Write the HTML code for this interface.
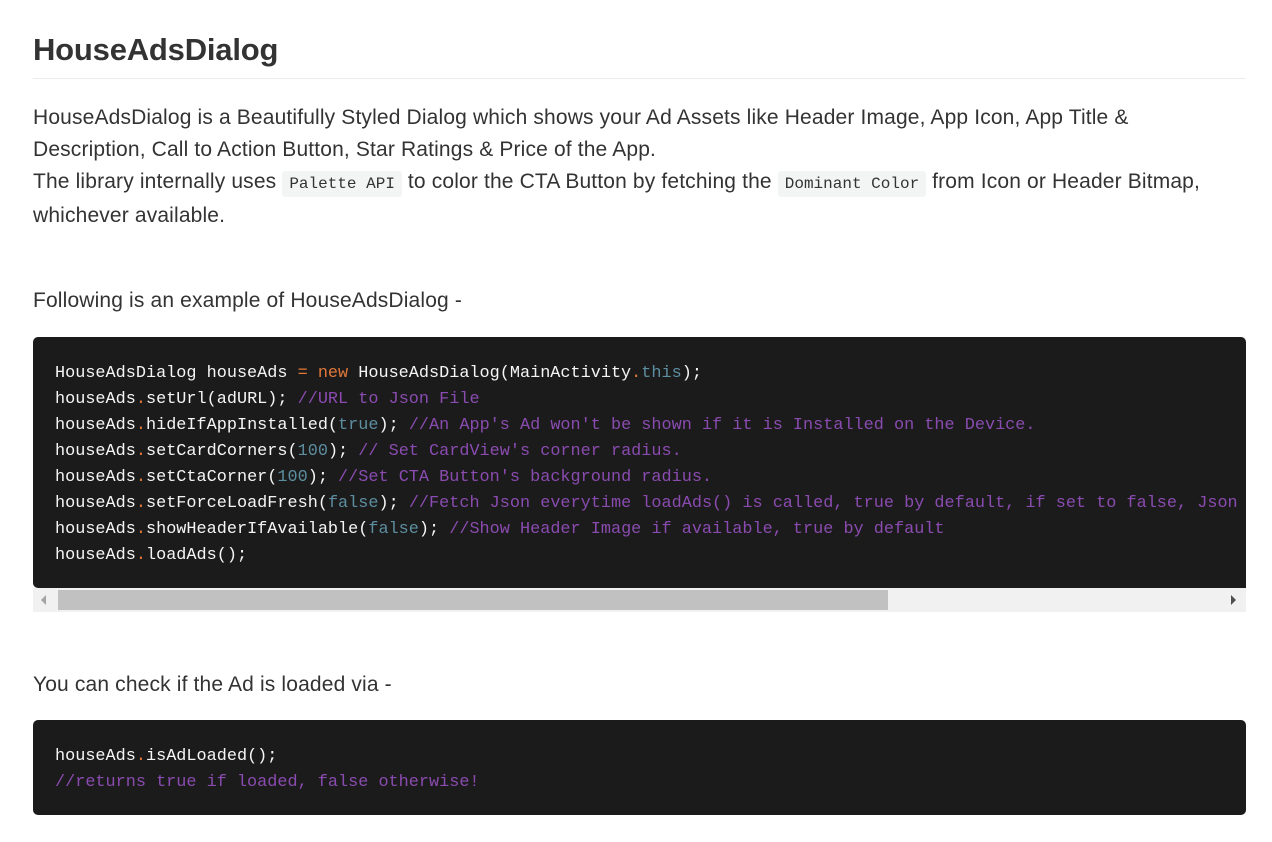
<!DOCTYPE html>
<html><head><meta charset="utf-8"><style>
body{margin:0;background:#fff;font-family:"Liberation Sans",sans-serif;color:#333;}
.w{position:absolute;left:33px;width:1213px;}
h1{position:absolute;left:33px;top:28px;margin:0;font-size:31px;font-weight:bold;color:#333;line-height:44px;letter-spacing:-0.2px}
.hr{position:absolute;left:33px;top:78px;width:1213px;height:1px;background:#eaecef;}
p{margin:0;font-size:21px;line-height:32px;color:#333;letter-spacing:0.15px}
code{font-family:"Liberation Mono",monospace;font-size:16px;background:#f3f4f4;padding:4px 7px;border-radius:3px;letter-spacing:0}
.pre{position:absolute;left:33px;width:1213px;background:#1b1b1b;font-family:"Liberation Mono",monospace;font-size:16.85px;line-height:26px;color:#f5f5f5;white-space:pre;overflow:hidden;}
.o{color:#e0783a}.n{color:#5d8ea0}.c{color:#8a4bb0}.d{color:#e0783a}
</style></head><body>
<h1>HouseAdsDialog</h1>
<div class="hr"></div>
<div class="w" style="top:102px"><p>HouseAdsDialog is a Beautifully Styled Dialog which shows your Ad Assets like Header Image, App Icon, App Title &amp;<br>Description, Call to Action Button, Star Ratings &amp; Price of the App.<br>The library internally uses <code>Palette API</code> to color the CTA Button by fetching the <code>Dominant Color</code> from Icon or Header Bitmap,<br>whichever available.</p></div>
<div class="w" style="top:285px"><p>Following is an example of HouseAdsDialog -</p></div>
<div class="pre" style="top:337px;height:251px;border-radius:5px 5px 0 5px;padding:24px 0 0 22px;box-sizing:border-box">HouseAdsDialog houseAds <span class="o">=</span> <span class="o">new</span> HouseAdsDialog(MainActivity<span class="d">.</span><span class="n">this</span>);
houseAds<span class="d">.</span>setUrl(adURL); <span class="c">//URL to Json File</span>
houseAds<span class="d">.</span>hideIfAppInstalled(<span class="n">true</span>); <span class="c">//An App's Ad won't be shown if it is Installed on the Device.</span>
houseAds<span class="d">.</span>setCardCorners(<span class="n">100</span>); <span class="c">// Set CardView's corner radius.</span>
houseAds<span class="d">.</span>setCtaCorner(<span class="n">100</span>); <span class="c">//Set CTA Button's background radius.</span>
houseAds<span class="d">.</span>setForceLoadFresh(<span class="n">false</span>); <span class="c">//Fetch Json everytime loadAds() is called, true by default, if set to false, Json</span>
houseAds<span class="d">.</span>showHeaderIfAvailable(<span class="n">false</span>); <span class="c">//Show Header Image if available, true by default</span>
houseAds<span class="d">.</span>loadAds();</div>
<div style="position:absolute;left:33px;top:588px;width:1213px;height:24px;background:#f1f1f1"></div>
<div style="position:absolute;left:58px;top:590px;width:830px;height:20px;background:#c1c1c1"></div>
<div style="position:absolute;left:41px;top:595px;width:0;height:0;border-top:5px solid transparent;border-bottom:5px solid transparent;border-right:5px solid #a3a3a3"></div>
<div style="position:absolute;left:1231px;top:595px;width:0;height:0;border-top:5px solid transparent;border-bottom:5px solid transparent;border-left:5px solid #505050"></div>
<div class="w" style="top:669px"><p>You can check if the Ad is loaded via -</p></div>
<div class="pre" style="top:720px;height:95px;border-radius:5px;padding:24px 0 0 22px;box-sizing:border-box">houseAds<span class="d">.</span>isAdLoaded();
<span class="c">//returns true if loaded, false otherwise!</span></div>
</body></html>
